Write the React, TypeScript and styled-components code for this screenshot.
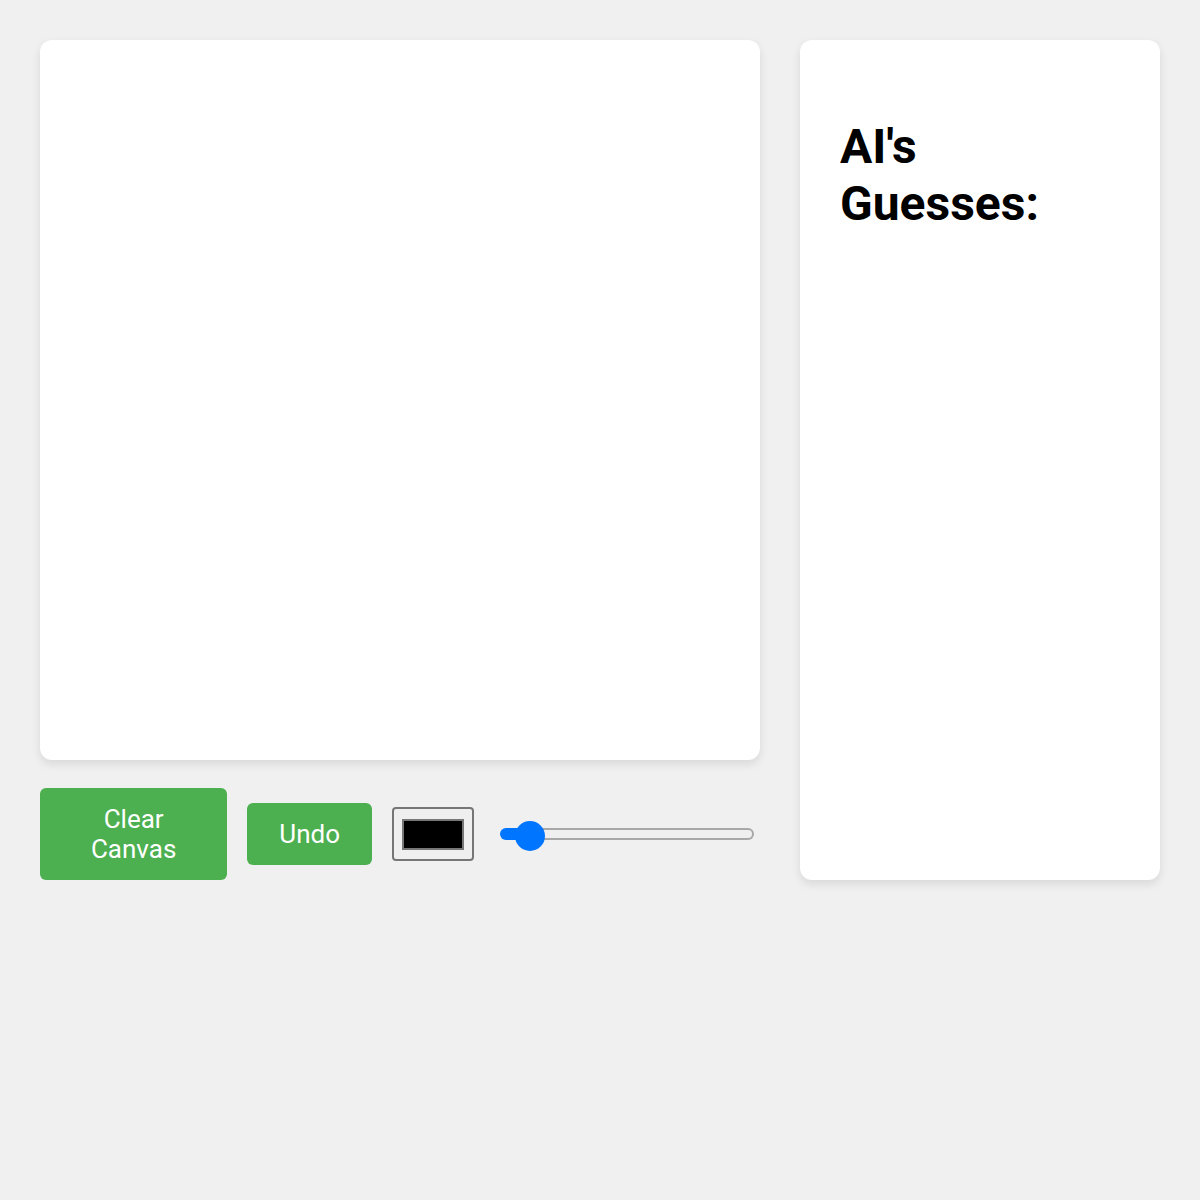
import { useState } from 'react';
import styled, { createGlobalStyle } from 'styled-components';

const GlobalStyle = createGlobalStyle`
    body {
        margin: 0;
        background: #f0f0f0;
        font-family: Roboto, 'Liberation Sans', sans-serif;
    }
`;

const Page = styled.div({
    display: 'flex',
    alignItems: 'stretch',
    gap: '40px',
    padding: '40px'
});

const LeftColumn = styled.div({
    display: 'flex',
    flexDirection: 'column',
    gap: '28px',
    width: '720px'
});

const Panel = styled.div({
    background: '#ffffff',
    borderRadius: '12px',
    boxShadow: '0 4px 10px rgba(0, 0, 0, 0.1)'
});

const CanvasPanel = styled(Panel)({
    width: '720px',
    height: '720px'
});

const GuessPanel = styled(Panel)({
    width: '360px',
    boxSizing: 'border-box',
    padding: '40px'
});

const Heading = styled.h2({
    fontSize: '48px',
    fontWeight: 700,
    margin: '38px 0',
    color: '#000'
});

const Controls = styled.div({
    display: 'flex',
    alignItems: 'center',
    gap: '20px'
});

const Button = styled.button<{ $fixed?: boolean }>((props) => ({
    flexShrink: props.$fixed ? 0 : 1,
    background: '#4caf50',
    color: '#ffffff',
    border: 'none',
    borderRadius: '6px',
    padding: '16px 32px',
    fontFamily: 'Roboto, sans-serif',
    fontSize: '26px',
    lineHeight: '30px',
    cursor: 'pointer'
}));

const ColorPicker = styled.div({
    flexShrink: 0,
    width: '82px',
    height: '54px',
    boxSizing: 'border-box',
    border: '2px solid #767676',
    borderRadius: '4px',
    background: '#efefef',
    display: 'flex',
    alignItems: 'center',
    justifyContent: 'center'
});

const Swatch = styled.div<{ $color: string }>((props) => ({
    width: '62px',
    height: '31px',
    boxSizing: 'border-box',
    border: '2px solid #777777',
    background: props.$color
}));

// track border is painted as a background layer so the blue fill can cover it
const Range = styled.input`
    flex-shrink: 0;
    -webkit-appearance: none;
    appearance: none;
    width: 254px;
    height: 30px;
    margin: 0 6px;
    background: transparent;

    &::-webkit-slider-runnable-track {
        height: 12px;
        border: 2px solid transparent;
        border-radius: 8px;
        background:
            linear-gradient(to right, #0075ff var(--fill-at), transparent var(--fill-at)) border-box,
            linear-gradient(#efefef, #efefef) padding-box,
            linear-gradient(#a8a8a8, #a8a8a8) border-box;
    }

    &::-webkit-slider-thumb {
        -webkit-appearance: none;
        appearance: none;
        width: 30px;
        height: 30px;
        margin-top: -9px;
        border: none;
        border-radius: 50%;
        background: #0075ff;
    }
`;

export default function App() {
    const [size, setSize] = useState(4);
    const fraction = (size - 1) / 49;
    const fillAt = 17 + fraction * 220;

    return (
        <>
            <GlobalStyle />
            <Page>
                <LeftColumn>
                    <CanvasPanel />
                    <Controls>
                        <Button>Clear Canvas</Button>
                        <Button $fixed>Undo</Button>
                        <ColorPicker>
                            <Swatch $color="#000000" />
                        </ColorPicker>
                        <Range
                            type="range"
                            min={1}
                            max={50}
                            value={size}
                            onChange={(e) => setSize(Number(e.target.value))}
                            style={{ '--fill-at': `${fillAt}px` } as React.CSSProperties}
                        />
                    </Controls>
                </LeftColumn>
                <GuessPanel>
                    <Heading>AI's Guesses:</Heading>
                </GuessPanel>
            </Page>
        </>
    );
}
